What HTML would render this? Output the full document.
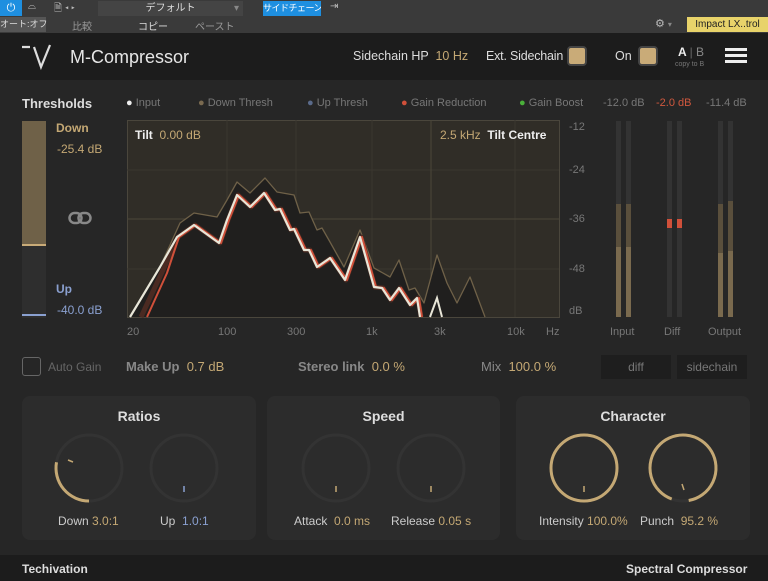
<!DOCTYPE html>
<html><head><meta charset="utf-8"><style>
*{margin:0;padding:0;box-sizing:border-box}
body{width:768px;height:581px;overflow:hidden;background:#262626;font-family:"Liberation Sans","Noto Sans CJK JP",sans-serif;position:relative;color:#ccc}
.a{position:absolute;white-space:nowrap}
.gold{color:#c4a874}
.panel{position:absolute;top:396px;height:144px;background:#2c2c2c;border-radius:8px}
.pt{position:absolute;top:12px;width:100%;text-align:center;font-size:14px;font-weight:bold;color:#ddd}
</style></head><body>
<div class="a" style="left:0;top:0;width:768px;height:33px;background:#3a3a3a"></div>
<div class="a" style="left:0;top:0;width:22px;height:16px;background:#1e8fe0;color:#fff;font-size:11px;text-align:center;line-height:16px">⏻</div>
<div class="a" style="left:28px;top:1px;font-size:10px;color:#bbb">⌓</div>
<div class="a" style="left:54px;top:1px;font-size:10px;color:#bbb">🗎 ◂ ▸</div>
<div class="a" style="left:98px;top:1px;width:145px;height:15px;background:#444;font-size:10px;color:#ddd;text-align:center;line-height:15px">デフォルト<span style="position:absolute;right:4px;color:#888">▾</span></div>
<div class="a" style="left:263px;top:1px;width:58px;height:15px;background:#1e8fe0;font-size:9px;color:#fff;text-align:center;line-height:15px;overflow:hidden;letter-spacing:-0.5px">サイドチェーン</div>
<div class="a" style="left:330px;top:1px;font-size:10px;color:#bbb">⇥</div>
<div class="a" style="left:0;top:17px;width:46px;height:15px;background:#555;font-size:9px;color:#ddd;text-align:center;line-height:15px">オート:オフ</div>
<div class="a" style="left:72px;top:18px;font-size:10px;color:#999">比較</div>
<div class="a" style="left:138px;top:18px;font-size:10px;color:#ddd">コピー</div>
<div class="a" style="left:195px;top:18px;font-size:10px;color:#999">ペースト</div>
<div class="a" style="left:655px;top:17px;font-size:11px;color:#bbb">⚙ <span style="font-size:8px;color:#888">▾</span></div>
<div class="a" style="left:687px;top:17px;width:81px;height:15px;background:#e8d36a;font-size:10px;color:#222;text-align:center;line-height:15px">Impact LX..trol</div>
<div class="a" style="left:0;top:33px;width:768px;height:47px;background:#1c1c1c"></div>
<svg class="a" style="left:20px;top:44px" width="45" height="26"><path d="M2 3h8M14 3l7 20 9-22" stroke="#ddd" stroke-width="2.2" fill="none"/></svg>
<div class="a" style="left:70px;top:47px;font-size:18px;color:#e6e6e6">M-Compressor</div>
<div class="a" style="left:353px;top:49px;font-size:12.5px;color:#ddd">Sidechain HP <span class="gold">&nbsp;10 Hz</span></div>
<div class="a" style="left:486px;top:49px;font-size:12.5px;color:#ddd;letter-spacing:-0.2px">Ext. Sidechain</div>
<div class="a" style="left:567px;top:46px;width:20px;height:20px;border:2px solid #444;border-radius:4px;background:#c9ab78"></div>
<div class="a" style="left:615px;top:49px;font-size:12.5px;color:#ddd">On</div>
<div class="a" style="left:638px;top:46px;width:20px;height:20px;border:2px solid #444;border-radius:4px;background:#c9ab78"></div>
<div class="a" style="left:678px;top:45px;font-size:12px;color:#eee;font-weight:bold">A <span style="color:#666;font-weight:normal">|</span> <span style="color:#888;font-weight:normal">B</span></div>
<div class="a" style="left:675px;top:61px;font-size:7px;color:#777">copy to B</div>
<div class="a" style="left:725px;top:48px;width:22px;height:3px;background:#eee;box-shadow:0 6px 0 #eee,0 12px 0 #eee"></div>
<div class="a" style="left:22px;top:96px;font-size:13px;font-weight:bold;color:#ddd">Thresholds</div>
<div class="a" style="left:126px;top:97px;font-size:11px;color:#777"><span style="color:#eee">●</span> Input</div>
<div class="a" style="left:198px;top:97px;font-size:11px;color:#777"><span style="color:#7a6a50">●</span> Down Thresh</div>
<div class="a" style="left:307px;top:97px;font-size:11px;color:#777"><span style="color:#5a6a8a">●</span> Up Thresh</div>
<div class="a" style="left:401px;top:97px;font-size:11px;color:#777"><span style="color:#d0503a">●</span> Gain Reduction</div>
<div class="a" style="left:519px;top:97px;font-size:11px;color:#777"><span style="color:#4ab03a">●</span> Gain Boost</div>
<div class="a" style="left:603px;top:97px;font-size:11px;color:#777">-12.0 dB</div>
<div class="a" style="left:656px;top:97px;font-size:11px;color:#d0583e">-2.0 dB</div>
<div class="a" style="left:706px;top:97px;font-size:11px;color:#777">-11.4 dB</div>
<div class="a" style="left:22px;top:121px;width:24px;height:197px;background:#2e2e2e"></div>
<div class="a" style="left:22px;top:121px;width:24px;height:124px;background:#6f6148"></div>
<div class="a" style="left:22px;top:244px;width:24px;height:2px;background:#c9ab78"></div>
<div class="a" style="left:22px;top:314px;width:24px;height:2px;background:#8aa0d0"></div>
<div class="a" style="left:56px;top:121px;font-size:12px;font-weight:bold;color:#c4a874">Down</div>
<div class="a" style="left:57px;top:142px;font-size:12px;color:#c4a874">-25.4 dB</div>
<div class="a" style="left:56px;top:282px;font-size:12px;font-weight:bold;color:#8aa0d0">Up</div>
<div class="a" style="left:57px;top:303px;font-size:12px;color:#8aa0d0">-40.0 dB</div>
<svg class="a" style="left:68px;top:211px" width="25" height="14"><rect x="1.5" y="2" width="12" height="10" rx="5" fill="none" stroke="#888" stroke-width="2.5"/><rect x="10.5" y="2" width="12" height="10" rx="5" fill="none" stroke="#888" stroke-width="2.5"/></svg>
<svg class="a" style="left:127px;top:120px" width="433" height="198">
<rect x="0.5" y="0.5" width="432" height="197" fill="#302d27" stroke="#4a463c"/>
<g stroke="#3a372f" stroke-width="1"><line x1="0" y1="50" x2="432" y2="50"/><line x1="0" y1="149" x2="432" y2="149"/><line x1="100" y1="0" x2="100" y2="197"/><line x1="169" y1="0" x2="169" y2="197"/><line x1="245" y1="0" x2="245" y2="197"/><line x1="388" y1="0" x2="388" y2="197"/></g>
<g stroke="#4b4639" stroke-width="1"><line x1="0" y1="99" x2="432" y2="99"/><line x1="304" y1="0" x2="304" y2="197"/></g>
<g transform="translate(-127,-120)">
<polygon fill="#201f1e" points="130,317 160,267 180,223 194,213 217,217 227,200 237,182 250,193 265,178 277,192 294,195 300,213 309,212 317,230 322,228 330,242 344,267 360,230 374,268 390,277 399,260 409,290 415,288 424,303 437,255 447,283 457,303 470,277 485,317"/>
<polyline fill="none" stroke="#6f6148" stroke-width="1.3" stroke-linejoin="round" points="130,317 160,267 180,223 194,213 217,217 227,200 237,182 250,193 265,178 277,192 294,195 300,213 309,212 317,230 322,228 330,242 344,267 360,230 374,268 390,277 399,260 409,290 415,288 424,303 437,255 447,283 457,303 470,277 485,317"/>
<polyline fill="none" stroke="#4a2a22" stroke-width="5" stroke-linejoin="round" transform="translate(1,3)" points="140,314 162,267 177,234 194,222 219,240 227,217 237,192 250,204 264,190 275,207 280,206 290,227 294,226 304,247 309,247 317,264 330,255 345,277 360,234 374,284 382,285 390,297 399,285 410,302 417,295 420,314"/>
<polyline fill="none" stroke="#d0503a" stroke-width="2" stroke-linejoin="round" transform="translate(2,6)" points="145,311 165,267 177,231 194,219 219,237 227,214 237,189 250,201 264,187 275,204 280,203 290,224 294,223 304,244 309,244 317,261 330,252 345,274 360,231 374,281 382,282 390,294 399,282 410,299 417,292 420,311"/>
<polyline fill="none" stroke="#e8e6d8" stroke-width="2.2" stroke-linejoin="round" points="130,317 160,267 177,237 194,225 219,243 227,220 237,195 250,207 264,193 275,210 280,209 290,230 294,229 304,250 309,250 317,267 330,258 345,280 360,237 374,287 382,288 390,300 399,288 410,305 417,298 420,317"/>
<polyline fill="none" stroke="#e8e6d8" stroke-width="2" points="430,317 437,298 442,317"/>
</g>
</svg>
<div class="a" style="left:135px;top:128px;font-size:12px;color:#eee;font-weight:bold">Tilt <span class="gold" style="font-weight:normal">&nbsp;0.00 dB</span></div>
<div class="a" style="left:440px;top:128px;font-size:12px;color:#c4a874">2.5 kHz <b style="color:#eee">&nbsp;Tilt Centre</b></div>
<div class="a" style="left:569px;top:121px;font-size:11px;color:#777">-12</div>
<div class="a" style="left:569px;top:164px;font-size:11px;color:#777">-24</div>
<div class="a" style="left:569px;top:213px;font-size:11px;color:#777">-36</div>
<div class="a" style="left:569px;top:263px;font-size:11px;color:#777">-48</div>
<div class="a" style="left:569px;top:305px;font-size:11px;color:#777">dB</div>
<div class="a" style="left:127px;top:326px;font-size:11px;color:#777">20</div>
<div class="a" style="left:218px;top:326px;font-size:11px;color:#777">100</div>
<div class="a" style="left:287px;top:326px;font-size:11px;color:#777">300</div>
<div class="a" style="left:366px;top:326px;font-size:11px;color:#777">1k</div>
<div class="a" style="left:434px;top:326px;font-size:11px;color:#777">3k</div>
<div class="a" style="left:507px;top:326px;font-size:11px;color:#777">10k</div>
<div class="a" style="left:546px;top:326px;font-size:11px;color:#777">Hz</div>
<svg class="a" style="left:610px;top:120px" width="140" height="198">
<g fill="#333"><rect x="6" y="1" width="5" height="196"/><rect x="16" y="1" width="5" height="196"/><rect x="57" y="1" width="5" height="196"/><rect x="67" y="1" width="5" height="196"/><rect x="108" y="1" width="5" height="196"/><rect x="118" y="1" width="5" height="196"/></g>
<g fill="#5a4f3c"><rect x="6" y="84" width="5" height="113"/><rect x="16" y="84" width="5" height="113"/><rect x="108" y="84" width="5" height="113"/><rect x="118" y="81" width="5" height="116"/></g>
<g fill="#7a6a4e"><rect x="6" y="127" width="5" height="70"/><rect x="16" y="127" width="5" height="70"/><rect x="108" y="133" width="5" height="64"/><rect x="118" y="131" width="5" height="66"/></g>
<g fill="#d0503a"><rect x="57" y="99" width="5" height="9"/><rect x="67" y="99" width="5" height="9"/></g>
</svg>
<div class="a" style="left:610px;top:326px;font-size:11px;color:#777">Input</div>
<div class="a" style="left:664px;top:326px;font-size:11px;color:#777">Diff</div>
<div class="a" style="left:708px;top:326px;font-size:11px;color:#777">Output</div>
<div class="a" style="left:22px;top:357px;width:19px;height:19px;border:1.5px solid #666;border-radius:3px"></div>
<div class="a" style="left:48px;top:360px;font-size:12px;color:#666">Auto Gain</div>
<div class="a" style="left:126px;top:359px;font-size:13px;color:#888;font-weight:bold">Make Up <span class="gold" style="font-weight:normal">&nbsp;0.7 dB</span></div>
<div class="a" style="left:298px;top:359px;font-size:13px;color:#888;font-weight:bold">Stereo link <span class="gold" style="font-weight:normal">&nbsp;0.0 %</span></div>
<div class="a" style="left:481px;top:359px;font-size:13px;color:#888">Mix <span class="gold">&nbsp;100.0 %</span></div>
<div class="a" style="left:601px;top:355px;width:70px;height:24px;background:#1e1e1e;font-size:12px;color:#777;text-align:center;line-height:24px">diff</div>
<div class="a" style="left:677px;top:355px;width:70px;height:24px;background:#1e1e1e;font-size:12px;color:#777;text-align:center;line-height:24px">sidechain</div>
<div class="panel" style="left:22px;width:234px"><div class="pt">Ratios</div></div>
<div class="panel" style="left:267px;width:233px"><div class="pt">Speed</div></div>
<div class="panel" style="left:516px;width:234px"><div class="pt">Character</div></div>
<svg class="a" style="left:0;top:430px" width="768" height="80">
<g fill="none" stroke-width="3">
<circle cx="89" cy="38" r="33" stroke="#333"/>
<path d="M89 71 A33 33 0 0 1 56.5 32.3" stroke="#c4a874"/>
<circle cx="184" cy="38" r="33" stroke="#333"/>
<circle cx="336" cy="38" r="33" stroke="#333"/>
<circle cx="431" cy="38" r="33" stroke="#333"/>
<circle cx="584" cy="38" r="33" stroke="#c4a874"/>
<circle cx="683" cy="38" r="33" stroke="#333"/>
<path d="M671.7 69 A33 33 0 1 1 688.7 70.5" stroke="#c4a874"/>
</g>
<g stroke-width="1.5"><line x1="68" y1="30" x2="73" y2="32" stroke="#c4a874"/><line x1="184" y1="56" x2="184" y2="62" stroke="#8aa0d0"/><line x1="336" y1="56" x2="336" y2="62" stroke="#c4a874"/><line x1="431" y1="56" x2="431" y2="62" stroke="#c4a874"/><line x1="584" y1="56" x2="584" y2="62" stroke="#c4a874"/><line x1="682" y1="54" x2="684" y2="60" stroke="#c4a874"/></g>
</svg>
<div class="a" style="left:58px;top:514px;font-size:12px;color:#ccc">Down <span class="gold">3.0:1</span></div>
<div class="a" style="left:160px;top:514px;font-size:12px;color:#ccc">Up <span style="color:#8aa0d0">&nbsp;1.0:1</span></div>
<div class="a" style="left:294px;top:514px;font-size:12px;color:#ccc">Attack <span class="gold">&nbsp;0.0 ms</span></div>
<div class="a" style="left:391px;top:514px;font-size:12px;color:#ccc">Release <span class="gold">0.05 s</span></div>
<div class="a" style="left:539px;top:514px;font-size:12px;color:#ccc">Intensity <span class="gold">100.0%</span></div>
<div class="a" style="left:640px;top:514px;font-size:12px;color:#ccc">Punch <span class="gold">&nbsp;95.2 %</span></div>
<div class="a" style="left:0;top:555px;width:768px;height:26px;background:#1c1c1c"></div>
<div class="a" style="left:22px;top:562px;font-size:12px;color:#ddd;font-weight:bold">Techivation</div>
<div class="a" style="left:626px;top:562px;font-size:12px;color:#ddd;font-weight:bold">Spectral Compressor</div>
</body></html>
